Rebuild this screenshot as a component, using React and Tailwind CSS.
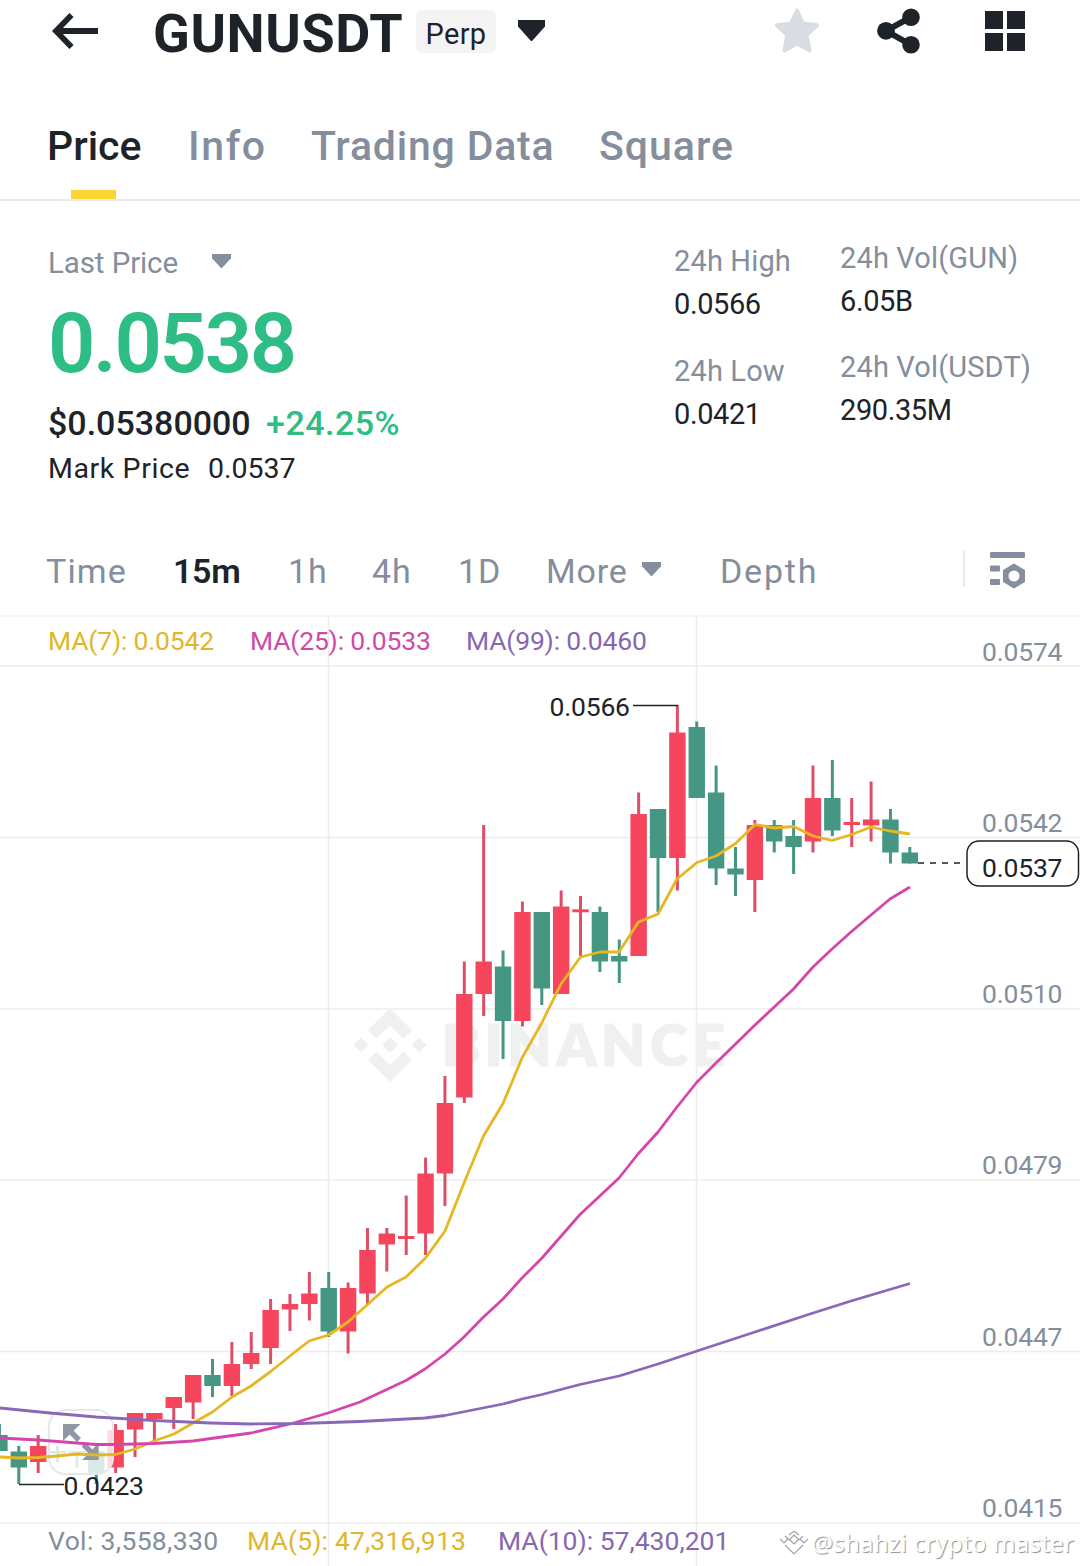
import React from 'react';

const STEP = 19.37;
const FIRST_X = 18.8;
const candleX = (i) => FIRST_X + i * STEP;

// [index, direction, body top, body bottom, high, low]
const candles = [
    [-1, 'g', 1435, 1451, 1424, 1451],
    [0, 'g', 1451.5, 1467.5, 1446, 1484],
    [1, 'r', 1446, 1462, 1435, 1473],
    [2, 'g', 1451, 1453.5, 1446, 1462],
    [3, 'n', 1451, 1453.5, 1451, 1468],
    [4, 'g', 1451, 1473, 1451, 1484],
    [5, 'r', 1430, 1467.5, 1424, 1473],
    [6, 'r', 1413, 1429.5, 1413, 1457],
    [7, 'r', 1413, 1419, 1413, 1440],
    [8, 'r', 1397, 1408, 1397, 1429],
    [9, 'r', 1375, 1402.5, 1375, 1419],
    [10, 'g', 1375, 1386, 1359, 1397],
    [11, 'r', 1364, 1386, 1342, 1396],
    [12, 'r', 1353, 1364, 1332, 1369],
    [13, 'r', 1310, 1348, 1299, 1364],
    [14, 'r', 1304, 1309.5, 1294, 1331],
    [15, 'r', 1293.5, 1304, 1272, 1320.5],
    [16, 'g', 1288, 1331.5, 1272, 1337],
    [17, 'r', 1288, 1331.5, 1282.5, 1353.5],
    [18, 'r', 1250, 1293.5, 1228, 1304],
    [19, 'r', 1233.5, 1244.5, 1228, 1271.5],
    [20, 'r', 1236, 1239, 1195.5, 1255],
    [21, 'r', 1173.5, 1233.5, 1157.5, 1255],
    [22, 'r', 1103, 1173.5, 1076, 1206],
    [23, 'r', 994, 1097.5, 961.5, 1103],
    [24, 'r', 961.5, 994, 825, 1016],
    [25, 'g', 966.5, 1021, 950.5, 1059],
    [26, 'r', 912, 1021, 901.5, 1026.5],
    [27, 'g', 912, 988.5, 912, 1005],
    [28, 'r', 906.5, 994, 890.5, 994],
    [29, 'r', 909.3, 912.3, 896, 956],
    [30, 'g', 912, 961.5, 906.5, 972],
    [31, 'g', 956, 961.5, 939.5, 983],
    [32, 'r', 814, 956, 792.5, 956],
    [33, 'g', 809, 858, 809, 912],
    [34, 'r', 732.5, 858, 705, 890.5],
    [35, 'g', 727, 798, 721.5, 798],
    [36, 'g', 792.5, 868.5, 765.5, 885],
    [37, 'g', 868.5, 874.5, 847, 896],
    [38, 'r', 825, 880, 820, 912],
    [39, 'g', 825, 841.5, 820, 852.5],
    [40, 'g', 836, 847, 820, 874],
    [41, 'r', 798, 841.5, 765.5, 852.5],
    [42, 'g', 798, 830.5, 760, 836],
    [43, 'r', 822, 825, 798, 847],
    [44, 'r', 819.5, 825.5, 781.5, 841.5],
    [45, 'g', 819.5, 852.5, 809, 863.5],
    [46, 'g', 852.5, 863.5, 847, 863.5],
];

const bodyColor = { r: '#f6465d', g: '#459682', n: '#8b919b' };
const wickColor = { r: '#dd4f66', g: '#459682', n: '#8b919b' };

const ma7 =
    '0,1457 19,1458 38,1457.5 57,1456 77,1454 96,1455 115.6,1454.5 135,1449 154,1441 174,1434 193,1423 212.5,1412 232,1397 251,1386 270.6,1371.5 290,1356 309,1341 328.6,1335 348,1322 367,1305 387,1287 406,1277 425.5,1258 445,1231 464,1183 483.5,1136 503,1103.5 522,1058 541.7,1023 561,984 580.5,957 600,952 619,952 638.5,922 658,914 677,879 697,862.5 716,856 735.5,843.5 755,824.5 774,828 793.5,826.5 813,836 832,840.5 851.7,834.5 871,827 890,831 910,834';
const ma25 =
    '0,1438 38,1440 77,1443 96,1444.5 115,1444.5 154,1443.5 193,1441 251,1433 290,1424 328,1413 360,1402 406,1380.5 425,1369 445,1354 464,1337 483,1317.5 503,1299 522,1278 542,1258 580,1214.5 619,1178 638,1154 658,1132 677,1107 697,1082 716,1063 755,1025 793.5,989 813,967 832,949 851,932 871,915 890,899 910,887';
const ma99 =
    '0,1408 50,1413 96,1417 154,1420.5 210,1423 250,1424 300,1423.5 360,1421.5 425,1418 445,1415.5 503,1404 522,1399 542,1394.5 580,1384.5 619,1376 658,1364 697,1351 755,1332 813,1313 851,1301 910,1283.5';

const priceLabels = [
    ['0.0574', 661],
    ['0.0542', 832],
    ['0.0510', 1003],
    ['0.0479', 1174],
    ['0.0447', 1346],
    ['0.0415', 1517],
];

const Caret = ({ className }) => (
    <svg viewBox="0 0 27 21" preserveAspectRatio="none" className={className} fill="currentColor">
        <path d="M0 0H27V6.5L14.5 20.5Q13.5 21.5 12.5 20.5L0 6.5Z" />
    </svg>
);

const BinanceMark = () => (
    <g fill="#eff0f0">
        <path d="M390 1008L412 1030L403.500 1038.500L390 1025L376.500 1038.500L368 1030Z" />
        <path d="M390 1082L412 1060L403.500 1051.500L390 1065L376.500 1051.500L368 1060Z" />
        <path d="M361 1037.500L368.500 1045L361 1052.500L353.500 1045Z" />
        <path d="M419 1037.500L426.500 1045L419 1052.500L411.500 1045Z" />
        <path d="M390 1037L398 1045L390 1053L382 1045Z" />
    </g>
);

const Header = () => (
    <header className="flex h-[100px] items-start text-[#1e2329]">
        <svg viewBox="0 0 46 38" className="mt-3 ml-[52px] h-[38px] w-[46px]" fill="none" stroke="currentColor" strokeWidth="5.800">
            <path d="M46 19H5M19.500 3L4 19L19.500 35" />
        </svg>
        <h1 className="mt-[7px] ml-[55px] w-[263px] text-[54px] leading-[54px] font-bold tracking-[0.6px] whitespace-nowrap">GUNUSDT</h1>
        <span className="mt-[10px] h-[43px] w-20 rounded-md bg-[#f4f4f5] text-center text-[29px] leading-[48px] tracking-[0.3px]">Perp</span>
        <Caret className="mt-5 ml-[22px] h-[21px] w-[27px]" />
        <svg viewBox="0 0 44 45" className="mt-2 ml-[230px] h-[45px] w-11 text-[#d9dce3]" fill="currentColor" stroke="currentColor" strokeWidth="4" strokeLinejoin="round">
            <path d="M22 2.500L28 15.500L42 17.200L31.500 27L34.500 42.500L22 35.500L9.500 42.500L12.300 27L2 17.200L16 15.500Z" />
        </svg>
        <svg viewBox="0 0 43 46" className="mt-2 ml-[58px] h-[46px] w-[43px]" fill="currentColor">
            <path d="M34 9.200L9 22.800L34 36.800" fill="none" stroke="currentColor" strokeWidth="6" />
            <circle cx="34" cy="9.300" r="8.800" />
            <circle cx="9" cy="22.800" r="8.900" />
            <circle cx="34" cy="36.800" r="8.800" />
        </svg>
        <div className="mt-[11px] ml-[65px] grid h-10 w-10 grid-cols-2 gap-[4.500px]">
            <span className="bg-current" />
            <span className="bg-current" />
            <span className="bg-current" />
            <span className="bg-current" />
        </div>
    </header>
);

const Tabs = () => (
    <nav className="flex h-[101px] items-start border-b-2 border-[#eaebec] pt-[26px] pl-[47px] text-[41px] leading-10 font-medium text-[#848e9c]">
        <div className="relative h-[73px] w-[141px] text-[#1e2329]">
            Price
            <span className="absolute bottom-0 left-6 h-[9px] w-[45px] bg-[#fcd535]" />
        </div>
        <div className="w-[123px] tracking-[1.6px]">Info</div>
        <div className="w-[288px] tracking-[0.800px]">Trading Data</div>
        <div className="tracking-[1px]">Square</div>
    </nav>
);

const Stat = ({ label, value, className }) => (
    <div className={className}>
        <div className="tracking-[0.15px] text-[#848e9c]">{label}</div>
        <div className="mt-[11px] tracking-[-0.4px] text-[#1e2329]">{value}</div>
    </div>
);

const Summary = () => (
    <section className="flex h-[329px] items-start pl-[48px] text-[#1e2329]">
        <div className="w-[626px] pt-[46px]">
            <div className="flex h-8 items-start text-[29.500px] leading-8 tracking-[-0.1px] text-[#848e9c]">
                <span className="w-[164px]">Last Price</span>
                <Caret className="mt-[7px] h-[14px] w-[19px]" />
            </div>
            <div className="mt-[23px] text-[83px] leading-[84px] font-semibold tracking-[-2.3px] text-[#2ebd85]">0.0538</div>
            <div className="mt-[19px] flex text-[34px] leading-9 font-medium">
                <span className="w-[218px]">$0.05380000</span>
                <span className="tracking-[0.5px] text-[#2ebd85]">+24.25%</span>
            </div>
            <div className="mt-[12px] flex text-[28.500px] leading-8">
                <span className="w-[160px] tracking-[0.6px]">Mark Price</span>
                <span>0.0537</span>
            </div>
        </div>
        <div className="w-[166px] pt-11 text-[29px] leading-8">
            <Stat label="24h High" value="0.0566" />
            <Stat label="24h Low" value="0.0421" className="mt-[35px]" />
        </div>
        <div className="pt-[41px] text-[29px] leading-8 whitespace-nowrap">
            <Stat label="24h Vol(GUN)" value="6.05B" />
            <Stat label="24h Vol(USDT)" value="290.35M" className="mt-[34px]" />
        </div>
    </section>
);

const Timeframes = () => (
    <div className="flex h-[87px] items-start border-b-2 border-[#f4f4f5] pt-[23px] pl-[46px] text-[34px] leading-9 tracking-[0.8px] text-[#848e9c]">
        <span className="w-[127px] tracking-[1.1px]">Time</span>
        <span className="w-[115px] font-semibold tracking-[-0.3px] text-[#1e2329]">15m</span>
        <span className="w-[84px]">1h</span>
        <span className="w-[86px]">4h</span>
        <span className="w-[88px]">1D</span>
        <span className="w-[96px]">More</span>
        <Caret className="mt-[9px] h-[14px] w-[19px]" />
        <span className="ml-[59px] w-[243px] tracking-[1.8px]">Depth</span>
        <span className="-mt-[2px] h-9 w-[2px] bg-[#eaebec]" />
        <svg viewBox="0 0 35 37" className="-mt-px ml-[25px] h-[37px] w-[35px]" fill="currentColor">
            <rect width="35" height="6" rx="1" />
            <rect y="13.500" width="10" height="6" rx="1" />
            <rect y="27" width="10" height="6" rx="1" />
            <path fillRule="evenodd" d="M24 11.500L35 18V30L24 36.500L13 30V18ZM24 18.500A5.500 5.500 0 1 0 24 29.500A5.500 5.500 0 1 0 24 18.500Z" />
        </svg>
    </div>
);

const Chart = () => (
    <svg viewBox="0 617 1080 949" className="block h-[949px] w-[1080px] font-[Roboto,sans-serif]">
        <g stroke="#ececed" strokeWidth="1.500">
            {[666, 837.5, 1009, 1180, 1351.5, 1523].map((y) => (
                <path key={y} d={`M0 ${y}H1080`} />
            ))}
            <path d="M328.500 617V1566M696.500 617V1566" />
        </g>

        <BinanceMark />
        <text x="442" y="1066" fontSize="57" fontWeight="800" fill="#eff0f0" stroke="#eff0f0" strokeWidth="1.200" textLength="283" style={{ fontFamily: 'Lato, sans-serif' }}>BINANCE</text>

        {candles.map(([i, dir, top, bottom, high, low]) => (
            <g key={i}>
                <rect x={candleX(i) - 1.5} y={high} width="3" height={low - high} fill={wickColor[dir]} />
                <rect x={candleX(i) - 8.2} y={top} width="16.400" height={bottom - top} fill={bodyColor[dir]} />
            </g>
        ))}

        {/* expand button */}
        <rect x="49" y="1410" width="64" height="64" rx="16" fill="#fff" fillOpacity="0.8" stroke="#e6e8ed" strokeWidth="2" />
        <g fill="#8e97a4">
            <path d="M63 1424H80.500L63 1441Z" />
            <path d="M98.700 1460V1443L82 1460Z" />
            <path d="M69 1430L79 1440M83.500 1444.500L93 1454" stroke="#8e97a4" strokeWidth="5.500" />
        </g>

        <g fill="none" strokeWidth="2.800" strokeLinejoin="round">
            <polyline points={ma7} stroke="#e6b722" />
            <polyline points={ma25} stroke="#d545ab" />
            <polyline points={ma99} stroke="#8a68b8" />
        </g>

        <g stroke="#1e2329" strokeWidth="1.500" fill="none">
            <path d="M633 705.500H678" />
            <path d="M19 1484.500H64" />
            <path d="M918 863H961" strokeDasharray="6 6" />
            <rect x="967" y="841" width="111.500" height="45" rx="12" fill="#fff" />
        </g>

        <g fontSize="26.500" fill="#1e2329">
            <text x="549.500" y="716" textLength="80.500">0.0566</text>
            <text x="63.500" y="1495" textLength="80.500">0.0423</text>
            <text x="982" y="877" textLength="80.500">0.0537</text>
        </g>
        <g fontSize="26.500" fill="#848e9c">
            {priceLabels.map(([label, y]) => (
                <text key={label} x="982" y={y} textLength="80.500">{label}</text>
            ))}
        </g>
    </svg>
);

const Attribution = () => (
    <div className="absolute right-[6px] bottom-px flex h-11 items-center gap-[3px] font-['Noto_Sans',sans-serif] text-[24px] leading-[30px] tracking-[0.25px] whitespace-nowrap text-white [text-shadow:1px_1px_1px_#8b8f94]">
        <svg viewBox="0 0 28 24" className="h-6 w-7" fill="none" stroke="#a0a3a9" strokeWidth="1.200">
            <path d="M5 5L9 9L14 4L19 9L23 5M0 8L4 12L8 8M20 8L24 12L28 8M10 9L14 13L18 9M5 14L14 23L23 14M9 4L14 0L19 4" />
        </svg>
        <span>@shahzi crypto master</span>
    </div>
);

const App = () => {
    return (
        <div className="h-[1566px] w-[1080px] overflow-hidden bg-white font-[Roboto,sans-serif]">
            <Header />
            <Tabs />
            <Summary />
            <Timeframes />
            <div className="relative">
                <Chart />
                <div className="absolute top-[10px] left-[48px] flex text-[26.500px] leading-7 tracking-[-0.18px] whitespace-nowrap">
                    <span className="w-[202px] text-[#e0b62c]">MA(7): 0.0542</span>
                    <span className="w-[216px] text-[#cf4aa6]">MA(25): 0.0533</span>
                    <span className="text-[#8768b0]">MA(99): 0.0460</span>
                </div>
                <div className="absolute bottom-[11px] left-[48px] flex text-[26.500px] leading-7 whitespace-nowrap">
                    <span className="w-[199px] tracking-[0.35px] text-[#848e9c]">Vol: 3,558,330</span>
                    <span className="w-[251px] tracking-[0.15px] text-[#e0b62c]">MA(5): 47,316,913</span>
                    <span className="text-[#8768b0]">MA(10): 57,430,201</span>
                </div>
                <Attribution />
            </div>
        </div>
    );
};

export default App;
